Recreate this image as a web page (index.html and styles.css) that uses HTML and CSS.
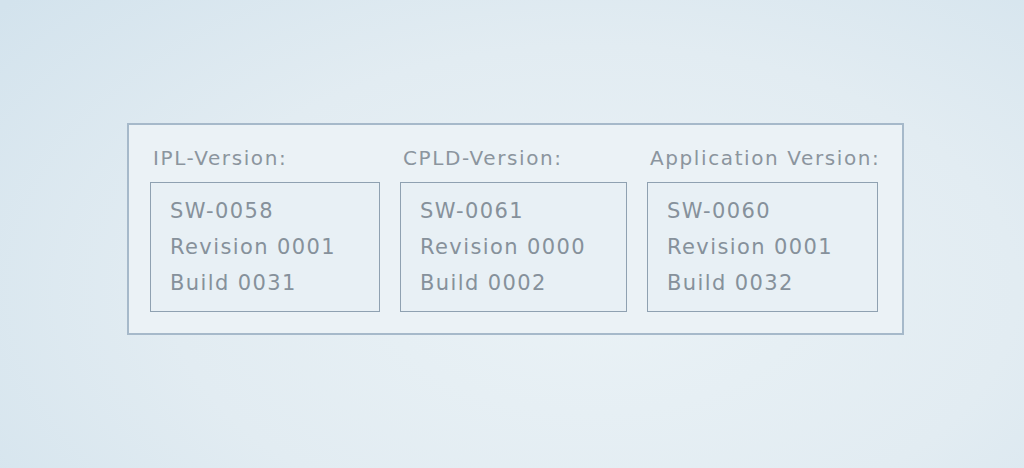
FILE: index.html
```html
<!DOCTYPE html>
<html>
<head>
    <title>Version Info</title>
    <link rel="stylesheet" href="styles.css">
</head>
<body>
    <div class="version-panel">
        <div class="version-col">
            <div class="version-label">IPL-Version:</div>
            <div class="version-box">
                <div class="version-line">SW-0058</div>
                <div class="version-line">Revision 0001</div>
                <div class="version-line">Build 0031</div>
            </div>
        </div>
        <div class="version-col">
            <div class="version-label">CPLD-Version:</div>
            <div class="version-box">
                <div class="version-line">SW-0061</div>
                <div class="version-line">Revision 0000</div>
                <div class="version-line">Build 0002</div>
            </div>
        </div>
        <div class="version-col">
            <div class="version-label">Application Version:</div>
            <div class="version-box">
                <div class="version-line">SW-0060</div>
                <div class="version-line">Revision 0001</div>
                <div class="version-line">Build 0032</div>
            </div>
        </div>
    </div>
</body>
</html>
```

FILE: styles.css
```css
html, body {
    height: 100%;
}
body {
    margin: 0;
    padding: 123px 0 0 127px;
    box-sizing: border-box;
    font-family: "DejaVu Sans", sans-serif;
    color: #86919b;
    background: radial-gradient(ellipse 75% 95% at 58% 62%, #eaf2f6 0%, #e2ecf2 55%, #d3e3ed 100%);
}
.version-panel {
    display: flex;
    gap: 20px;
    width: 728px;
    padding: 21px 24px 21px 21px;
    border: 2px solid #a6b9ca;
    background: #ebf2f6;
}
.version-col {
    flex: none;
}
.version-col:nth-child(1) {
    width: 230px;
}
.version-col:nth-child(2) {
    width: 227px;
}
.version-col:nth-child(3) {
    width: 231px;
}
.version-label {
    font-size: 20px;
    line-height: 24px;
    letter-spacing: 1.6px;
    white-space: nowrap;
    padding-left: 3px;
    margin-bottom: 12px;
    color: #8b959e;
}
.version-box {
    border: 1.5px solid #8fa1b1;
    padding: 10px 0 10px 19px;
    background: #e8f0f5;
}
.version-line {
    font-size: 21px;
    line-height: 36px;
    letter-spacing: 1.4px;
    white-space: nowrap;
}
```
